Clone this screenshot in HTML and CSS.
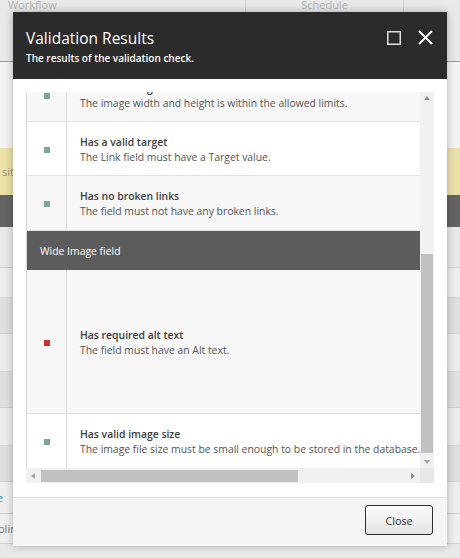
FILE: index.html
```html
<!DOCTYPE html>
<html lang="en">
<head>
<meta charset="utf-8">
<title>Validation Results</title>
<link rel="stylesheet" href="styles.css">
</head>
<body>
<div class="page">
  <div class="tabs">
    <div class="tab tab-wf"><span>Workflow</span></div>
    <div class="tab tab-sc"><span>Schedule</span></div>
    <div class="tab tab-rest"></div>
  </div>
  <div class="band b-light"></div>
  <div class="band b-yellow"><span class="bg-text">sit</span></div>
  <div class="band b-dark"></div>
  <div class="band b-l1"></div>
  <div class="band b-l0"></div>
  <div class="band b-d1"></div>
  <div class="band b-l2"></div>
  <div class="band b-d1"></div>
  <div class="band b-l2"></div>
  <div class="band b-d1"></div>
  <div class="band b-link"><span class="bg-link">e</span></div>
  <div class="band b-last"><span class="bg-text2">olir</span></div>
  <div class="band b-end"></div>
</div>

<div class="modal">
  <div class="modal-header">
    <div class="titles">
      <div class="title">Validation Results</div>
      <div class="subtitle">The results of the validation check.</div>
    </div>
    <div class="actions">
      <svg class="ico" width="14" height="14" viewBox="0 0 14 14"><rect x="0.75" y="0.75" width="12.5" height="12.5" fill="none" stroke="#e0e0e0" stroke-width="1.5"/></svg>
      <svg class="ico" width="15" height="15" viewBox="0 0 15 15"><path d="M1 1 L14 14 M14 1 L1 14" stroke="#ffffff" stroke-width="2" fill="none"/></svg>
    </div>
  </div>
  <div class="modal-body">
    <div class="grid">
      <div class="viewport">
        <div class="content">
          <div class="row alt r1">
            <div class="icol"><span class="sq ok"></span></div>
            <div class="tcol"><div class="rt">Has valid image dimensions</div><div class="rd">The image width and height is within the allowed limits.</div></div>
          </div>
          <div class="row r2">
            <div class="icol"><span class="sq ok"></span></div>
            <div class="tcol"><div class="rt">Has a valid target</div><div class="rd">The Link field must have a Target value.</div></div>
          </div>
          <div class="row alt r3">
            <div class="icol"><span class="sq ok"></span></div>
            <div class="tcol"><div class="rt">Has no broken links</div><div class="rd">The field must not have any broken links.</div></div>
          </div>
          <div class="section">Wide Image field</div>
          <div class="row alt r4">
            <div class="icol"><span class="sq err"></span></div>
            <div class="tcol"><div class="rt">Has required alt text</div><div class="rd">The field must have an Alt text.</div></div>
          </div>
          <div class="row r5">
            <div class="icol"><span class="sq ok"></span></div>
            <div class="tcol"><div class="rt">Has valid image size</div><div class="rd">The image file size must be small enough to be stored in the database.</div></div>
          </div>
        </div>
      </div>
      <div class="vscroll">
        <div class="sbtn"><span class="tri up"></span></div>
        <div class="vtrack"><div class="vthumb"></div></div>
        <div class="sbtn"><span class="tri down"></span></div>
      </div>
      <div class="hscroll">
        <div class="sbtn"><span class="tri left"></span></div>
        <div class="htrack"><div class="hthumb"></div></div>
        <div class="sbtn"><span class="tri right"></span></div>
      </div>
      <div class="corner"></div>
    </div>
  </div>
  <div class="modal-footer">
    <button class="btn">Close</button>
  </div>
</div>
</body>
</html>
```

FILE: styles.css
```css
* { box-sizing: border-box; }
html, body {
  margin: 0;
  padding: 0;
}
body {
  width: 460px;
  height: 558px;
  overflow: hidden;
  background: #e9e9e9;
  font-family: "Open Sans", "DejaVu Sans", sans-serif;
  position: relative;
}

/* background page */
.page {
  display: flex;
  flex-direction: column;
  width: 460px;
}
.tabs {
  display: flex;
  height: 62px;
  background: #e9e9e9;
  border-bottom: 1px solid #9c9c9c;
}
.tab {
  font-size: 11px;
  line-height: 12px;
  color: #b4b4b4;
}
.tab span { display: block; margin-top: -1px; }
.tab-wf { width: 246px; padding-left: 8px; border-right: 1px solid #d2d2d2; }
.tab-sc { width: 158px; text-align: center; border-right: 1px solid #d2d2d2; }
.tab-rest { flex: 1; }

.band { width: 100%; flex: none; }
.b-light { height: 86px; background: #f3f3f3; }
.b-yellow {
  height: 47px;
  background: #ebe0a7;
  display: flex;
  align-items: center;
  padding-left: 2px;
}
.bg-text { font-size: 11px; color: #9a9480; }
.b-dark { height: 32px; background: #646464; }
.b-l1 { height: 41px; background: #e9e9e9; border-bottom: 1px solid #cfcfcf; }
.b-l0 { height: 29px; background: #eeeeee; }
.b-l2 { height: 37px; background: #ececec; }
.b-d1 { height: 37px; background: #dfdfdf; border-bottom: 1px solid #cfcfcf; border-top: 1px solid #d6d6d6; }
.b-link {
  height: 32px;
  background: #efefef;
  border-bottom: 1px solid #cccccc;
  display: flex;
  align-items: center;
}
.bg-link { font-size: 11px; color: #3d8fd1; margin-left: -3px; }
.b-last {
  height: 30px;
  background: #efefef;
  display: flex;
  align-items: center;
  border-bottom: 1px solid #d0d0d0;
}
.bg-text2 { font-size: 11px; color: #777; margin-left: -2px; }
.b-end { height: 20px; background: #e9e9e9; }

/* modal (overlay) */
.modal {
  position: absolute;
  left: 13px;
  top: 12px;
  width: 434px;
  height: 534px;
  background: #ffffff;
  display: flex;
  flex-direction: column;
  box-shadow: 0 0 8px rgba(0, 0, 0, 0.28);
}
.modal-header {
  height: 67px;
  background: #2b2b2b;
  display: flex;
  justify-content: space-between;
  padding: 16px 14px 0 13px;
}
.title {
  font-size: 15.5px;
  line-height: 20px;
  color: #ffffff;
}
.subtitle {
  margin-top: 3px;
  font-size: 10px;
  line-height: 14px;
  font-weight: 600;
  color: #ffffff;
}
.actions {
  display: flex;
  gap: 17px;
  align-items: flex-start;
  padding-top: 3px;
}
.ico { display: block; }
.actions .ico:last-child { margin-top: -1px; }

.modal-body {
  flex: 1;
  padding: 13px 13px 0 13px;
}
.grid {
  display: grid;
  grid-template-columns: 394px 14px;
  grid-template-rows: 376px 15px;
  width: 408px;
  height: 391px;
}
.viewport {
  overflow: hidden;
  border-left: 1px solid #d6d6d6;
}
.content { width: 570px; margin-top: -24px; }
.row {
  display: flex;
  background: #ffffff;
  border-bottom: 1px solid #e0e0e0;
}
.row.alt { background: #f7f7f7; }
.r1, .r2 { height: 54px; }
.r3 { height: 55px; }
.r4 { height: 144px; }
.r5 { height: 55px; }
.icol {
  width: 40px;
  border-right: 1px solid #dcdcdc;
  display: flex;
  align-items: center;
  justify-content: center;
  padding-top: 2px;
}
.sq { width: 6px; height: 6px; display: block; }
.sq.ok { background: #7fa597; }
.sq.err { background: #d1302b; }
.tcol {
  flex: 1;
  display: flex;
  flex-direction: column;
  justify-content: center;
  padding-left: 13px;
  padding-top: 2px;
  font-size: 10.4px;
  line-height: 15px;
  white-space: nowrap;
}
.rt { font-weight: 600; color: #3d3d3d; }
.rd { color: #555555; }
.section {
  height: 39px;
  background: #5c5c5c;
  color: #ffffff;
  font-size: 10.4px;
  display: flex;
  align-items: center;
  padding-left: 13px;
  padding-top: 1px;
}

/* fake scrollbars */
.vscroll {
  display: flex;
  flex-direction: column;
  background: #f1f1f1;
}
.sbtn {
  width: 14px;
  height: 14px;
  display: flex;
  align-items: center;
  justify-content: center;
  flex: none;
}
.hscroll .sbtn { height: 15px; }
.vtrack { flex: 1; padding: 148px 1px 0 1px; }
.vthumb { height: 199px; background: #c1c1c1; }
.hscroll {
  display: flex;
  background: #f1f1f1;
}
.htrack { flex: 1; padding: 2px 0 1px 1px; }
.hthumb { width: 257px; height: 12px; background: #c1c1c1; }
.corner { background: #e8e8e8; }
.tri { width: 0; height: 0; display: block; }
.tri.up { border-left: 3px solid transparent; border-right: 3px solid transparent; border-bottom: 4px solid #8c8c8c; margin-top: -2px; }
.tri.down { border-left: 3px solid transparent; border-right: 3px solid transparent; border-top: 4px solid #a5a5a5; margin-top: 2px; }
.tri.left { border-top: 3px solid transparent; border-bottom: 3px solid transparent; border-right: 4px solid #a5a5a5; }
.tri.right { border-top: 3px solid transparent; border-bottom: 3px solid transparent; border-left: 4px solid #8c8c8c; }

.modal-footer {
  height: 49px;
  border-top: 1px solid #e3e3e3;
  background: #f5f5f5;
  display: flex;
  justify-content: flex-end;
  align-items: flex-start;
  padding: 7px 14px 0 0;
}
.btn {
  width: 68px;
  height: 30px;
  border: 1.5px solid #2e2e2e;
  border-radius: 3px;
  background: linear-gradient(#fbfbfb, #e4e4e4);
  font-family: "Open Sans", "DejaVu Sans", sans-serif;
  font-size: 10.8px;
  color: #333333;
  padding: 0;
}
```
